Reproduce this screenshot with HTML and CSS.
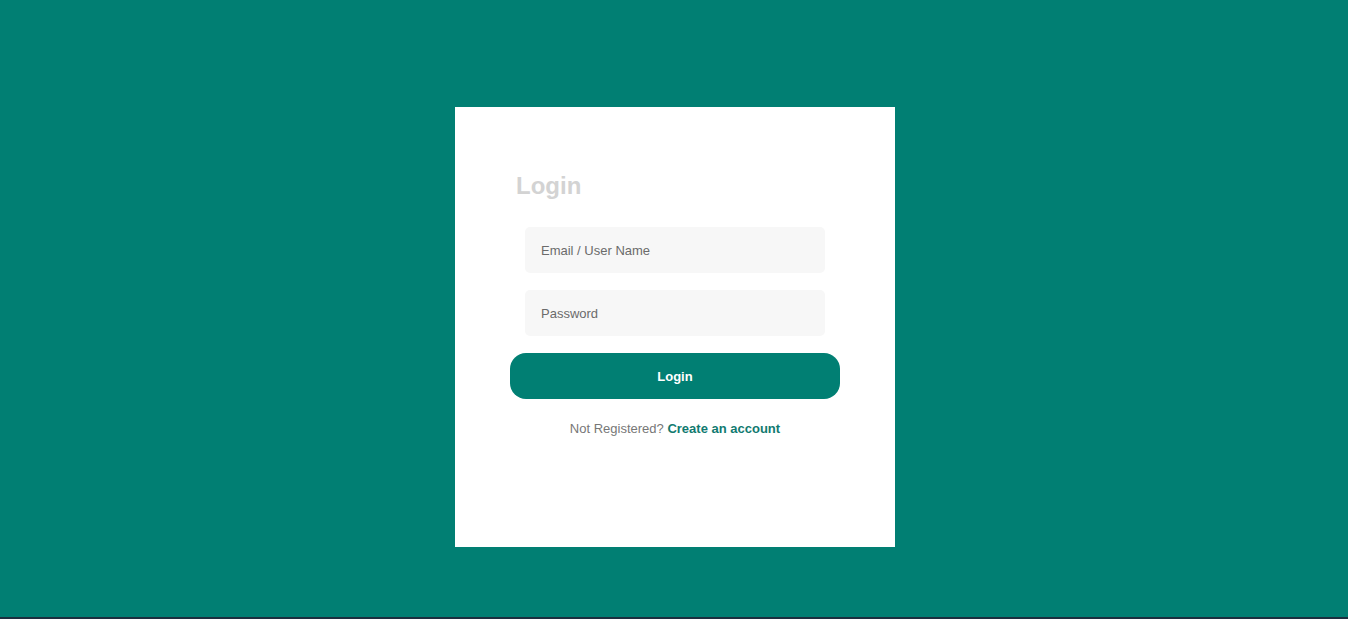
FILE: index.html
```html
<!DOCTYPE html>
<html lang="en">
<head>
  <meta charset="UTF-8">
  <meta name="viewport" content="width=device-width, initial-scale=1.0">
  <title>Login</title>
  <link rel="stylesheet" href="styles.css">
</head>
<body>
  <div class="page">
    <div class="login-card">
      <h1>Login</h1>
      <form class="login-form">
        <input type="text" placeholder="Email / User Name">
        <input type="password" placeholder="Password">
        <button type="submit">Login</button>
        <p class="register">Not Registered? <a href="#">Create an account</a></p>
      </form>
    </div>
  </div>
</body>
</html>
```

FILE: styles.css
```css
body {
  margin: 0;
  font-family: "Liberation Sans", Arial, sans-serif;
  background-color: #1b2f3f;
}
.page {
  height: 617px;
  background-color: #017f73;
  display: flex;
  justify-content: center;
  align-items: flex-start;
  padding-left: 2px;
}
.login-card {
  width: 440px;
  height: 440px;
  margin-top: 107px;
  padding: 65px 55px 0;
  box-sizing: border-box;
  background-color: #fff;
}
.login-card h1 {
  margin: 0 0 27px 6px;
  font-size: 24px;
  color: #d3d3d3;
}
.login-form {
  display: flex;
  flex-direction: column;
  align-items: center;
  gap: 17px;
}
.login-form input {
  width: 300px;
  height: 46px;
  padding: 0 16px;
  box-sizing: border-box;
  border: none;
  border-radius: 5px;
  background-color: #f7f7f7;
  font-family: inherit;
  font-size: 13px;
  color: #333;
}
.login-form input::placeholder {
  color: #6b6b6b;
}
.login-form button {
  width: 330px;
  height: 46px;
  border: none;
  border-radius: 16px;
  background-color: #017f73;
  color: #fff;
  font-family: inherit;
  font-size: 13px;
  font-weight: bold;
}
.register {
  margin: 5px 0 0;
  font-size: 13px;
  color: #777;
}
.register a {
  color: #117a70;
  font-weight: bold;
  text-decoration: none;
}
```
